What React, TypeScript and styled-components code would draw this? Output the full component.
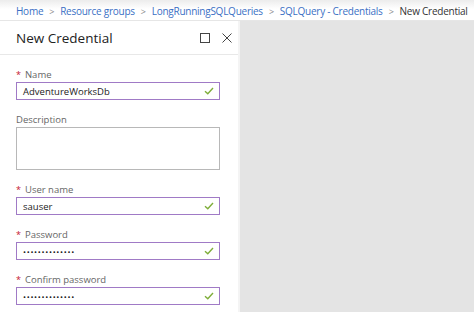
import { Fragment } from "react";
import styled, { createGlobalStyle } from "styled-components";

const GlobalStyle = createGlobalStyle`
  html, body {
    margin: 0;
    padding: 0;
    background: #e4e4e4;
    font-family: "Open Sans", "Liberation Sans", sans-serif;
  }
`;

const Page = styled.div`
  width: 474px;
  height: 312px;
  display: flex;
  flex-direction: column;
  overflow: hidden;
`;

const Breadcrumb = styled.nav`
  height: 21px;
  flex: none;
  display: flex;
  align-items: center;
  gap: 6px;
  padding: 2px 0 0 16px;
  background: linear-gradient(#ececec, #ffffff 45%);
  border-bottom: 1px solid #e6e6e6;
  box-sizing: border-box;
  font-size: 10px;
  letter-spacing: -0.25px;
  white-space: nowrap;
`;

const Crumb = styled.span<{ $current?: boolean }>`
  color: ${(p) => (p.$current ? "#333" : "#3a6fc4")};
`;

const Sep = styled.span`
  color: #888;
  font-size: 9px;
`;

const Body = styled.div`
  flex: 1;
  display: flex;
`;

const Blade = styled.section`
  width: 238px;
  background: #fff;
  border-right: 2px solid #f4f4f4;
  display: flex;
  flex-direction: column;
`;

const Header = styled.header`
  height: 33px;
  display: flex;
  align-items: center;
  padding: 0 0 0 16px;
  border-bottom: 1px solid #e8e8e8;
`;

const Title = styled.h2`
  margin: 0;
  flex: 1;
  font-size: 13.5px;
  font-weight: 400;
  color: #222;
`;

const IconBtn = styled.span`
  width: 22px;
  display: flex;
  justify-content: center;
  color: #444;
`;

const Form = styled.div`
  padding: 12px 18px 0 16px;
  display: flex;
  flex-direction: column;
`;

const Field = styled.div`
  margin-bottom: 12px;
`;

const Label = styled.div`
  height: 14px;
  font-size: 9.5px;
  color: #666;
  display: flex;
  align-items: center;
  gap: 4px;
  margin-bottom: 1px;
`;

const Star = styled.span`
  color: #c4122f;
  font-size: 9px;
`;

const Input = styled.div<{ $valid?: boolean }>`
  height: 18px;
  box-sizing: border-box;
  border: 1px solid ${(p) => (p.$valid ? "#a07ac6" : "#b8b8b8")};
  display: flex;
  align-items: center;
  padding: 0 5px 0 6px;
  font-size: 9.5px;
  color: #222;
`;

const Value = styled.span<{ $secret?: boolean }>`
  flex: 1;
  letter-spacing: ${(p) => (p.$secret ? "0.7px" : "0")};
  font-size: ${(p) => (p.$secret ? "8px" : "9.5px")};
`;

const TextArea = styled.div`
  height: 43px;
  box-sizing: border-box;
  border: 1px solid #b8b8b8;
`;

const Canvas = styled.div`
  flex: 1;
  background: #e4e4e4;
`;

function Check() {
  return (
    <svg width="10" height="8" viewBox="0 0 10 8">
      <path d="M1 4.2 L3.8 6.8 L9 1" fill="none" stroke="#7fae3a" strokeWidth="1.4" />
    </svg>
  );
}

function TextField({ label, value, secret }: { label: string; value: string; secret?: boolean }) {
  return (
    <Field>
      <Label>
        <Star>*</Star>
        {label}
      </Label>
      <Input $valid>
        <Value $secret={secret}>{value}</Value>
        <Check />
      </Input>
    </Field>
  );
}

export default function App() {
  const crumbs = ["Home", "Resource groups", "LongRunningSQLQueries", "SQLQuery - Credentials"];
  return (
    <Page>
      <GlobalStyle />
      <Breadcrumb>
        {crumbs.map((c) => (
          <Fragment key={c}>
            <Crumb>{c}</Crumb>
            <Sep>&gt;</Sep>
          </Fragment>
        ))}
        <Crumb $current>New Credential</Crumb>
      </Breadcrumb>
      <Body>
        <Blade>
          <Header>
            <Title>New Credential</Title>
            <IconBtn>
              <svg width="10" height="10" viewBox="0 0 10 10">
                <rect x="0.5" y="0.5" width="9" height="9" fill="none" stroke="#444" />
              </svg>
            </IconBtn>
            <IconBtn>
              <svg width="10" height="10" viewBox="0 0 10 10">
                <path d="M0.5 0.5 L9.5 9.5 M9.5 0.5 L0.5 9.5" stroke="#444" strokeWidth="1" />
              </svg>
            </IconBtn>
          </Header>
          <Form>
            <TextField label="Name" value="AdventureWorksDb" />
            <Field>
              <Label>Description</Label>
              <TextArea />
            </Field>
            <TextField label="User name" value="sauser" />
            <TextField label="Password" value="••••••••••••••" secret />
            <TextField label="Confirm password" value="••••••••••••••" secret />
          </Form>
        </Blade>
        <Canvas />
      </Body>
    </Page>
  );
}
